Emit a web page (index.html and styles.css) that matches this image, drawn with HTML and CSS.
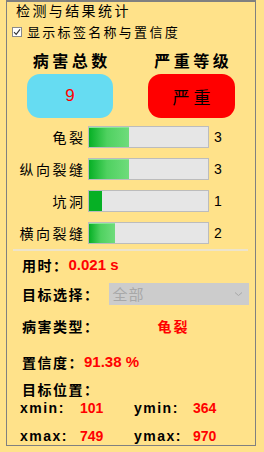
FILE: index.html
```html
<!DOCTYPE html>
<html>
<head>
    <title>检测与结果统计</title>
    <link rel="stylesheet" href="styles.css">
</head>
<body>
    <div class="panel">
        <div class="panel-title">检测与结果统计</div>

        <label class="check-row">
            <span class="check-box">
                <svg width="8" height="8" viewBox="0 0 8 8"><path d="M1 4.2 L3.2 6.4 L7 1.4" fill="none" stroke="#333" stroke-width="1.1"/></svg>
            </span>
            显示标签名称与置信度
        </label>

        <div class="stats">
            <div class="stat">
                <div class="stat-head">病害总数</div>
                <div class="stat-box total">9</div>
            </div>
            <div class="stat">
                <div class="stat-head">严重等级</div>
                <div class="stat-box level">严重</div>
            </div>
        </div>

        <div class="bars">
            <div class="bar-label">龟裂</div>
            <div class="bar-track"><div class="bar-fill" style="width: 33.3%"></div></div>
            <div class="bar-num">3</div>

            <div class="bar-label">纵向裂缝</div>
            <div class="bar-track"><div class="bar-fill" style="width: 33.3%"></div></div>
            <div class="bar-num">3</div>

            <div class="bar-label">坑洞</div>
            <div class="bar-track"><div class="bar-fill solid" style="width: 11.1%"></div></div>
            <div class="bar-num">1</div>

            <div class="bar-label">横向裂缝</div>
            <div class="bar-track"><div class="bar-fill" style="width: 22.2%"></div></div>
            <div class="bar-num">2</div>
        </div>

        <div class="divider"></div>

        <div class="info">
            <div class="info-row time-row">
                <span class="info-label">用时：</span><span class="value">0.021 s</span>
            </div>
            <div class="info-row select-row">
                <span class="info-label">目标选择：</span>
                <div class="select">
                    <span>全部</span>
                    <svg width="9" height="6" viewBox="0 0 9 6"><path d="M1 1.5 L4.5 4.5 L8 1.5" fill="none" stroke="#a8a8a8" stroke-width="1"/></svg>
                </div>
            </div>
            <div class="info-row type-row">
                <span class="info-label">病害类型：</span><span class="type-value">龟裂</span>
            </div>
            <div class="info-row conf-row">
                <span class="info-label">置信度：</span><span class="value">91.38 %</span>
            </div>
            <div class="info-row pos-title">
                <span class="info-label">目标位置：</span>
            </div>
            <div class="coords">
                <span class="coord-key">xmin:</span><span class="coord-val">101</span>
                <span class="coord-key">ymin:</span><span class="coord-val">364</span>
                <span class="coord-key">xmax:</span><span class="coord-val">749</span>
                <span class="coord-key">ymax:</span><span class="coord-val">970</span>
            </div>
        </div>
    </div>
</body>
</html>
```

FILE: styles.css
```css
body { margin: 0; background: #ffe28a; font-family: "Noto Sans CJK SC", sans-serif; color: #000; }
.panel { box-sizing: border-box; margin-left: 6px; width: 250px; height: 446px; border: 1px solid #808080; border-top-width: 2px; }
.panel-title { padding-left: 9px; font-size: 14px; line-height: 16px; height: 16px; letter-spacing: 2.4px; }
.check-row { display: flex; align-items: center; margin-top: 7px; padding-left: 5px; font-size: 13px; line-height: 14px; letter-spacing: 2.3px; }
.check-box { box-sizing: border-box; width: 10px; height: 10px; border: 1px solid #8a8a8a; background: #fff; display: flex; align-items: center; justify-content: center; margin-right: 5px; }
.stats { display: flex; margin-top: 11px; }
.stat { display: flex; flex-direction: column; align-items: center; }
.stat:first-child { margin-left: 20px; width: 86px; }
.stat:last-child { margin-left: 35px; width: 87px; }
.stat-head { font-size: 16px; font-weight: bold; line-height: 20px; letter-spacing: 3.5px; margin-right: -3.5px; white-space: nowrap; }
.stat-box { width: 100%; height: 44px; margin-top: 4px; border-radius: 13px; display: flex; align-items: center; justify-content: center; font-size: 16px; }
.stat-box.total { background: #66dcf2; color: #ff0000; font-family: "Liberation Sans", sans-serif; font-size: 17px; }
.stat-box.level { background: #ff0000; color: #000; letter-spacing: 4px; padding-left: 4px; box-sizing: border-box; font-size: 17px; }
.bars { display: grid; grid-template-columns: 76px 121px auto; column-gap: 5px; row-gap: 10px; margin-top: 8px; align-items: center; }
.bar-label { text-align: right; font-size: 14px; letter-spacing: 2.5px; margin-right: -2.5px; line-height: 22px; white-space: nowrap; }
.bar-track { box-sizing: border-box; height: 22px; background: #e6e6e6; border: 1px solid #bcbcbc; }
.bar-fill { height: 100%; background: linear-gradient(to right, #06b025 0%, #4fd160 45%, #6fdc7c 100%); box-shadow: inset 0 1px 0 #8ae796; }
.bar-fill.solid { background: #06b025; box-shadow: none; }
.bar-num { font-family: "Liberation Sans", sans-serif; font-size: 14px; }
.divider { margin: 5px 7px 0 6px; height: 2px; background: #ede4cb; }
.info { padding-left: 15px; }
.info-row { display: flex; align-items: center; line-height: 16px; }
.info-label { font-size: 14px; font-weight: bold; letter-spacing: 1.5px; white-space: nowrap; }
.value { color: #ff0000; font-family: "Liberation Sans", sans-serif; font-weight: bold; font-size: 15px; }
.time-row { margin-top: 6px; height: 16px; }
.select-row { margin-top: 10px; height: 22px; }
.select { box-sizing: border-box; width: 140px; height: 22px; margin-left: 9px; background: #cccccc; display: flex; align-items: center; justify-content: space-between; padding: 0 6px 0 4px; color: #a8a8a8; font-size: 15px; letter-spacing: 1px; }
.type-row { margin-top: 13px; height: 16px; }
.type-value { color: #ff0000; font-size: 14px; font-weight: bold; letter-spacing: 2px; margin-left: 58px; }
.conf-row { margin-top: 20px; height: 16px; }
.pos-title { margin-top: 11px; height: 16px; }
.coords { display: grid; grid-template-columns: 60px 54px 59px auto; row-gap: 10px; margin-left: -2px; margin-top: 2px; font-family: "Liberation Sans", sans-serif; font-weight: bold; font-size: 14px; line-height: 18px; }
.coord-key { letter-spacing: 1.5px; }
.coord-val { color: #ff0000; }
```
